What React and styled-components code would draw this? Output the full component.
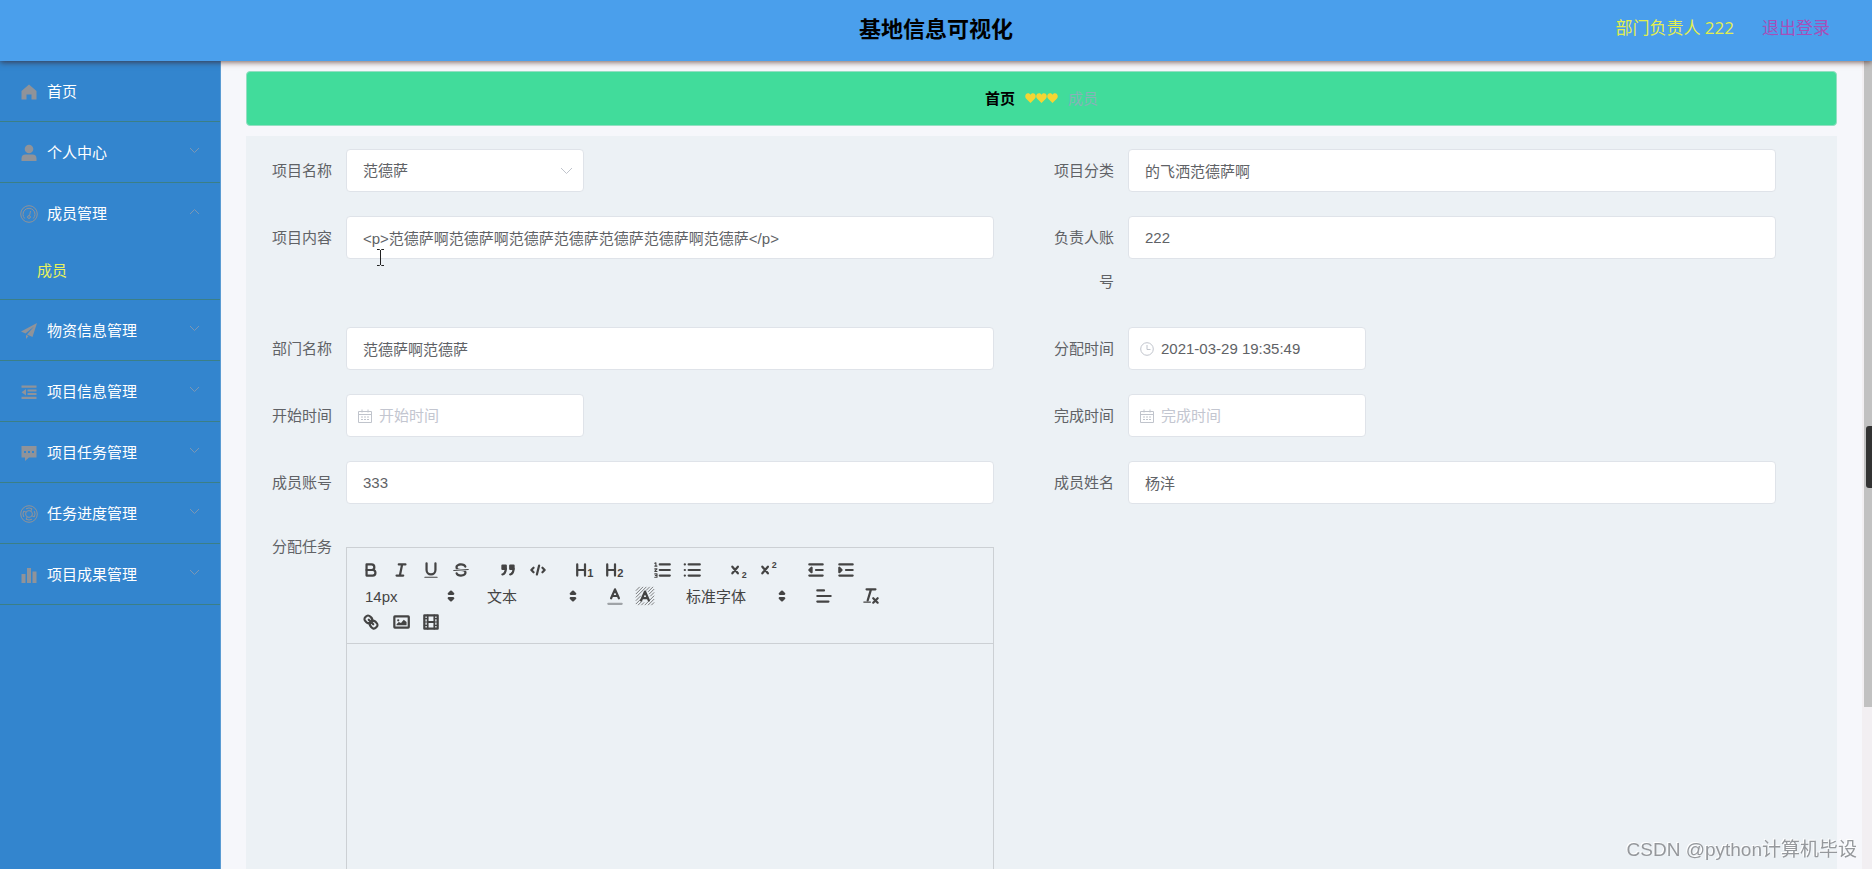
import React, { Component } from 'react';
import styled, { createGlobalStyle, css } from 'styled-components';

const GlobalStyle = createGlobalStyle`
  * {
    box-sizing: border-box;
  }
  body {
    margin: 0;
    background: #f6f7fb;
    font-family: 'Liberation Sans', 'Noto Sans CJK SC', sans-serif;
    font-size: 15px;
    color: #606266;
  }
  button, input, select, textarea {
    font: inherit;
    color: inherit;
    margin: 0;
    border: 0;
    background: none;
    outline: none;
  }
`;

const Page = styled.div`
  display: flex;
  flex-direction: column;
  height: 100vh;
  overflow: hidden;
`;
const Header = styled.header`
  display: grid;
  grid-template-columns: 1fr auto 1fr;
  align-items: center;
  flex: none;
  height: 61px;
  padding: 0 42px 6px;
  background: #4a9fec;
  box-shadow: 0 1px 6px rgba(60, 20, 10, 0.7);
  font-family: 'Open Sans', 'Noto Sans CJK SC', sans-serif;
  z-index: 1;
`;
const Title = styled.h1`
  grid-column: 2;
  margin: 0;
  font-size: 22px;
  line-height: 30px;
  color: #000;
`;
const HeaderRight = styled.div`
  display: flex;
  justify-content: flex-end;
  gap: 28px;
  font-size: 17px;
  line-height: 24px;
  color: #e3ee4e;
`;
const Logout = styled.a`
  color: #a64fb9;
  text-decoration: none;
`;
const Body = styled.div`
  display: flex;
  flex: 1;
  min-height: 0;
`;

const Sidebar = styled.nav`
  flex: none;
  width: 221px;
  background: #3385ce;
  border-right: 1px solid #5a9bd3;
`;
const MenuGroup = styled.div`
  border-bottom: 1px solid #3b7f86;
`;
const MenuButton = styled.button`
  display: flex;
  align-items: center;
  width: 100%;
  height: 60px;
  padding: 0 20px;
  color: #fff;
  text-align: left;
  cursor: pointer;
`;
const MenuIcon = styled.svg`
  flex: none;
  width: 18px;
  height: 18px;
  margin: 2px 9px 0 0;
  fill: #909399;
  stroke: none;
`;
const MenuText = styled.span`
  flex: 1;
  padding-bottom: 2px;
`;
const MenuArrow = styled.svg`
  width: 11px;
  height: 7px;
  margin-bottom: 4px;
  fill: none;
  stroke: #7b97b5;
`;
const SubLink = styled.a`
  display: block;
  height: 56px;
  padding-left: 37px;
  line-height: 55px;
  color: #e8f25c;
  text-decoration: none;
`;

const Main = styled.main`
  flex: 1;
  min-width: 0;
  padding: 10px 25px;
  overflow-y: auto;
  scrollbar-width: none;
`;
const Breadcrumb = styled.div`
  display: flex;
  align-items: center;
  justify-content: center;
  gap: 10px;
  height: 55px;
  margin-bottom: 10px;
  padding-bottom: 2px;
  background: #41dc9b;
  border: 1px solid #93dfc2;
  border-radius: 4px;
`;
const CrumbHome = styled.a`
  font-weight: bold;
  color: #000;
  text-decoration: none;
`;
const Hearts = styled.svg`
  width: 33px;
  height: 10px;
  fill: #f5d533;
`;
const CrumbCurrent = styled.span`
  color: #86b3b8;
`;

const Panel = styled.form`
  padding: 13px 61px 30px 12px;
  background: #ecf1f5;
`;
const FormGrid = styled.div`
  display: grid;
  grid-template-columns: 1fr 1fr;
  gap: 23px 46px;
`;
const FormItem = styled.div`
  display: flex;
  align-items: flex-start;
`;
const Label = styled.label`
  flex: none;
  width: 88px;
  padding-right: 14px;
  line-height: 44px;
  text-align: right;
`;
const control = css`
  height: 43px;
  padding: 0 16px;
  background: #fff;
  border: 1px solid #dfe3e9;
  border-radius: 4px;
`;
const Input = styled.input`
  ${control}
  flex: 1;
  min-width: 0;
`;
const SelectBox = styled.div`
  display: grid;
  align-items: center;
  width: 238px;
`;
const Select = styled.select`
  ${control}
  grid-area: 1 / 1;
  appearance: none;
`;
const SelectArrow = styled.svg`
  grid-area: 1 / 1;
  justify-self: end;
  width: 13px;
  height: 8px;
  margin-right: 11px;
  fill: none;
  stroke: #c0c4cc;
  pointer-events: none;
`;
const DateBox = styled.div`
  ${control}
  display: flex;
  align-items: center;
  gap: 7px;
  width: 238px;
  padding: 0 11px;
  svg {
    flex: none;
    width: 14px;
    height: 14px;
    fill: none;
    stroke: #c0c4cc;
  }
`;
const DateInput = styled.input`
  flex: 1;
  min-width: 0;
  padding: 0;
  &::placeholder {
    color: #c3c6d0;
    opacity: 1;
  }
`;

const EditorItem = styled(FormItem)`
  width: calc(50% - 23px);
  margin-top: 20px;
`;
const Editor = styled.div`
  flex: 1;
  min-width: 0;
  margin-top: 22px;
  border: 1px solid #ccd0d4;
`;
const Toolbar = styled.div`
  padding: 9px 9px 8px;
  border-bottom: 1px solid #ccd0d4;
`;
const ToolRow = styled.div`
  display: flex;
  gap: 17px;
  height: 26px;
`;
const ToolGroup = styled.div`
  display: flex;
`;
const ToolButton = styled.button`
  width: 30px;
  height: 26px;
  padding: 3px 5px;
  cursor: pointer;
`;
const ToolSvg = styled.svg`
  display: block;
  width: 20px;
  height: 20px;
  fill: none;
  stroke: #444;
  stroke-width: 2;
  stroke-linecap: round;
  stroke-linejoin: round;
  .thin {
    stroke-width: 1;
  }
  .hatch {
    stroke-width: 0.6;
  }
  .fill {
    fill: #444;
    stroke: none;
  }
  .both {
    fill: #444;
  }
  text {
    fill: #444;
    stroke: none;
    font-family: 'Liberation Sans', sans-serif;
    font-weight: bold;
  }
`;
const Picker = styled.div`
  display: grid;
  align-items: center;
  width: ${props => (props.$wide ? 115 : 105)}px;
  color: #444;
`;
const PickerSelect = styled.select`
  grid-area: 1 / 1;
  width: 100%;
  height: 26px;
  padding: 0 20px 0 9px;
  appearance: none;
`;
const PickerArrow = styled(ToolSvg)`
  grid-area: 1 / 1;
  justify-self: end;
  pointer-events: none;
`;
const EditorText = styled.textarea`
  display: block;
  width: 100%;
  height: 480px;
  padding: 13px 16px;
  resize: none;
`;

const ScrollTrack = styled.div`
  flex: none;
  width: 10px;
  padding-left: 2px;
  background: #f2eff2;
`;
const ScrollThumb = styled.div`
  height: 80%;
  background: #c1c1c1;
`;
const SideHandle = styled.div`
  position: fixed;
  right: 0;
  top: 426px;
  width: 6px;
  height: 62px;
  background: #333;
  border-radius: 3px 0 0 3px;
`;
const Watermark = styled.div`
  position: fixed;
  right: 15px;
  bottom: 5px;
  font-size: 19px;
  line-height: 28px;
  color: #95989c;
  text-shadow: -1px -1px 0 #fff;
  pointer-events: none;
`;
const TextCursor = styled.svg`
  position: fixed;
  left: 376px;
  top: 249px;
  width: 9px;
  height: 17px;
  fill: none;
  stroke: #222;
  pointer-events: none;
`;

const menuIcons = {
  home: <path d="M9 1.5L1.5 8v8.5h5v-5h5v5h5V8z" />,
  user: (
    <g>
      <circle cx="9" cy="5" r="4.3" />
      <path d="M1.5 17v-2.5a4 4 0 0 1 4-4h7a4 4 0 0 1 4 4V17z" />
    </g>
  ),
  meter: (
    <g fill="none" stroke="#909399">
      <circle cx="9" cy="9" r="8.3" />
      <path d="M4.700 13.500a6 6 0 1 1 8.600 0M9.600 10.500l.9-4.500" />
      <circle cx="9" cy="12" r="1.4" />
    </g>
  ),
  plane: <path d="M17 1L1 9.500l4.500 2L14 4.500 7 12.500l5.500 2.500zM6 13v4l2.500-3z" />,
  fold: <path d="M1.500 2.500h15v2.300h-15zM7.500 6.500h9v2h-9zM7.500 10h9v2h-9zM1.500 13.700h15V16h-15zM6 6v6.500L1.500 9.200z" />,
  chat: (
    <path
      fillRule="evenodd"
      d="M1.500 2h15v11.500H9L5 17v-3.500H1.500zM4 7v2h2V7zM8 7v2h2V7zM12 7v2h2V7z"
    />
  ),
  buoy: (
    <g fill="none" stroke="#909399">
      <circle cx="9" cy="9" r="8.3" />
      <circle cx="9" cy="9" r="3.4" />
      <path d="M6 3.800a6 6 0 0 1 6 0l-1.300 2.400M14.200 6a6 6 0 0 1 0 6l-2.400-1.300M12 14.200a6 6 0 0 1-6 0l1.300-2.400M3.800 12a6 6 0 0 1 0-6l2.400 1.300" />
    </g>
  ),
  bars: <path d="M1.500 8h4v9h-4zM7 2h4v15H7zM12.500 5.500h4V17h-4z" />
};

const toolIcons = {
  加粗: (
    <g>
      <path d="M5,4H9.500A2.500,2.500,0,0,1,9.500,9H5Z" />
      <path d="M5,9h5.500a2.500,2.500,0,0,1,0,5H5Z" />
    </g>
  ),
  斜体: <path d="M7,4H13M5,14H11M8,14L10,4" />,
  下划线: (
    <g>
      <path strokeWidth="2" d="M5,3V9a4,4,0,0,0,8,0V3" />
      <rect className="fill" x="3" y="15" width="12" height="1" rx="0.5" />
    </g>
  ),
  删除线: (
    <g>
      <path className="thin" d="M15.500,8.500L2.500,9.500" />
      <path className="fill" d="M9.007,8C6.542,7.791,6,7.519,6,6.500,6,5.792,7.283,5,9,5c1.571,0,2.765.679,2.969,1.309a1,1,0,0,0,1.900-.617C13.356,4.106,11.354,3,9,3,6.200,3,4,4.538,4,6.500a3.200,3.200,0,0,0,.5,1.843Z" />
      <path className="fill" d="M8.984,10C11.457,10.208,12,10.479,12,11.500c0,.708-1.283,1.500-3,1.500-1.571,0-2.765-.679-2.969-1.309a1,1,0,1,0-1.900.617C4.644,13.894,6.646,15,9,15c2.800,0,5-1.538,5-3.500a3.200,3.200,0,0,0-.5-1.843Z" />
    </g>
  ),
  引用: (
    <g>
      <path className="both" d="M4,5h3v3h-3zM11,5h3v3h-3z" />
      <path className="both" d="M7,8c0,4.031-3,5-3,5M14,8c0,4.031-3,5-3,5" />
    </g>
  ),
  代码: <path d="M5,7L3,9L5,11M13,7L15,9L13,11M10,5L8,13" />,
  标题1: (
    <g>
      <path d="M2,4V14M9,4V14M2,9H9" />
      <text x="11" y="15" fontSize="10">1</text>
    </g>
  ),
  标题2: (
    <g>
      <path d="M2,4V14M9,4V14M2,9H9" />
      <text x="11" y="15" fontSize="10">2</text>
    </g>
  ),
  有序列表: (
    <g>
      <path d="M7,4H16M7,9H16M7,14H16" />
      <path className="thin" d="M2.500,5.500H4.500M3.500,5.500V2.500L2.500,3M2.500,8H4.500L2.500,10.300H4.500M2.500,12.500H4.500V15.500H2.500M3,14H4.500" />
    </g>
  ),
  无序列表: <path d="M6,4H16M6,9H16M6,14H16M2.500,4H2.600M2.500,9H2.600M2.500,14H2.600" />,
  下标: (
    <g>
      <path d="M3,6L8,12M8,6L3,12" />
      <text x="11.5" y="16" fontSize="8">2</text>
    </g>
  ),
  上标: (
    <g>
      <path d="M3,6L8,12M8,6L3,12" />
      <text x="11.5" y="7" fontSize="8">2</text>
    </g>
  ),
  减少缩进: (
    <g>
      <path d="M3,14H15M3,4H15M9,9H15" />
      <path className="both" d="M5,7V11L3,9Z" />
    </g>
  ),
  增加缩进: (
    <g>
      <path d="M3,14H15M3,4H15M9,9H15" />
      <path className="both" d="M3,7V11L5,9Z" />
    </g>
  ),
  文字颜色: (
    <g>
      <path d="M3,16H15" stroke="#9fa3a7" />
      <path d="M5.500,11L9,3L12.500,11M7,9H11" />
    </g>
  ),
  背景颜色: (
    <g>
      <path
        className="hatch"
        d="M1,4L4,1M1,7L7,1M1,10L10,1M1,13L5,9M1,16L5,12M3,17L6,14M6,17L8,15M9,17L17,9M12,17L17,12M15,17L17,15M10,4L13,1M12,5L16,1M13,7L17,3M14,9L17,6"
      />
      <path d="M5.500,13L9,5L12.500,13M7,11H11" />
    </g>
  ),
  对齐: <path d="M3,9H15M3,14H13M3,4H9" />,
  清除格式: (
    <g>
      <path d="M5,3H13M6,13L9,3M11,11L15,15M15,11L11,15" />
      <rect className="fill" x="2" y="14" width="7" height="1" rx="0.5" />
    </g>
  ),
  链接: (
    <g>
      <path d="M7,7L11,11" />
      <path d="M8.900,4.577a3.476,3.476,0,0,1,.36,4.679A3.476,3.476,0,0,1,4.577,8.900C3.185,7.500,2.035,6.400,4.217,4.217S7.500,3.185,8.900,4.577Z" />
      <path d="M13.423,9.100a3.476,3.476,0,0,0-4.679-.36,3.476,3.476,0,0,0,.36,4.679c1.392,1.392,2.500,2.542,4.679.36S14.815,10.500,13.423,9.100Z" />
    </g>
  ),
  图片: (
    <g>
      <rect x="3" y="4" width="13" height="10" rx="0.5" />
      <circle className="fill" cx="6.5" cy="7.5" r="1" />
      <path className="fill" d="M5,12V11l2-2 2,1L11.500,7 14,9v3z" />
    </g>
  ),
  视频: (
    <g>
      <rect x="3" y="3" width="12" height="12" />
      <path d="M6,3V15M12,3V15M6,9H12" strokeWidth="1.6" />
      <path className="thin" d="M3,6H6M3,9H6M3,12H6M12,6H15M12,9H15M12,12H15" />
    </g>
  )
};

const menus = [
  { icon: 'home', text: '首页', leaf: true },
  { icon: 'user', text: '个人中心' },
  { icon: 'meter', text: '成员管理', children: ['成员'] },
  { icon: 'plane', text: '物资信息管理' },
  { icon: 'fold', text: '项目信息管理' },
  { icon: 'chat', text: '项目任务管理' },
  { icon: 'buoy', text: '任务进度管理' },
  { icon: 'bars', text: '项目成果管理' }
];

const fields = [
  { name: 'xiangmumingcheng', label: '项目名称', type: 'select', value: '范德萨' },
  { name: 'xiangmufenlei', label: '项目分类', value: '的飞洒范德萨啊' },
  { name: 'xiangmuneirong', label: '项目内容', value: '<p>范德萨啊范德萨啊范德萨范德萨范德萨范德萨啊范德萨</p>' },
  { name: 'fuzerenzhanghao', label: '负责人账号', value: '222' },
  { name: 'bumenmingcheng', label: '部门名称', value: '范德萨啊范德萨' },
  { name: 'fenpeishijian', label: '分配时间', type: 'time', value: '2021-03-29 19:35:49' },
  { name: 'kaishishijian', label: '开始时间', type: 'date', value: '' },
  { name: 'wanchengshijian', label: '完成时间', type: 'date', value: '' },
  { name: 'chengyuanzhanghao', label: '成员账号', value: '333' },
  { name: 'chengyuanxingming', label: '成员姓名', value: '杨洋' }
];

// strings are pickers, arrays are groups of buttons
const toolRows = [
  [
    ['加粗', '斜体', '下划线', '删除线'],
    ['引用', '代码'],
    ['标题1', '标题2'],
    ['有序列表', '无序列表'],
    ['下标', '上标'],
    ['减少缩进', '增加缩进']
  ],
  ['14px', '文本', ['文字颜色', '背景颜色'], '标准字体', ['对齐'], ['清除格式']],
  [['链接', '图片', '视频']]
];

const ClockIcon = () => (
  <svg viewBox="0 0 14 14">
    <circle cx="7" cy="7" r="6.3" />
    <path d="M7 3v4.500h3.500" />
  </svg>
);

const CalendarIcon = () => (
  <svg viewBox="0 0 14 14">
    <path d="M.5 2.500h13v11H.5zM.5 5.500h13M4 .5v3M10 .5v3" />
    <path d="M3 8h8M3 10.500h8" strokeDasharray="2 1" />
  </svg>
);

class App extends Component {
  state = {
    open: '成员管理'
  }

  toggle = text => {
    this.setState(prev => ({ open: prev.open === text ? '' : text }));
  }

  renderMenu = menu => {
    const opened = !menu.leaf && this.state.open === menu.text;

    return (
      <MenuGroup key={menu.text}>
        <MenuButton type="button" onClick={() => this.toggle(menu.text)}>
          <MenuIcon viewBox="0 0 18 18">{menuIcons[menu.icon]}</MenuIcon>
          <MenuText>{menu.text}</MenuText>
          {!menu.leaf && (
            <MenuArrow viewBox="0 0 11 7">
              <path d={opened ? 'M1 6L5.500 1.500L10 6' : 'M1 1L5.500 5.500L10 1'} />
            </MenuArrow>
          )}
        </MenuButton>
        {opened && (menu.children || []).map(child => (
          <SubLink key={child} href="#chengyuan">{child}</SubLink>
        ))}
      </MenuGroup>
    );
  }

  renderControl = field => {
    if (field.type === 'select') {
      return (
        <SelectBox>
          <Select id={field.name} defaultValue={field.value}>
            <option>{field.value}</option>
          </Select>
          <SelectArrow viewBox="0 0 13 8">
            <path d="M1 1L6.500 6.500L12 1" />
          </SelectArrow>
        </SelectBox>
      );
    }
    if (field.type) {
      return (
        <DateBox>
          {field.type === 'time' ? <ClockIcon /> : <CalendarIcon />}
          <DateInput id={field.name} defaultValue={field.value} placeholder={field.label} />
        </DateBox>
      );
    }
    return <Input id={field.name} defaultValue={field.value} />;
  }

  renderTool = (tool, i) => {
    if (typeof tool === 'string') {
      return (
        <Picker key={i} $wide={tool === '标准字体'}>
          <PickerSelect aria-label={tool}>
            <option>{tool}</option>
          </PickerSelect>
          <PickerArrow viewBox="0 0 18 18">
            <path className="both" d="M7,11L9,13L11,11ZM7,7L9,5L11,7Z" />
          </PickerArrow>
        </Picker>
      );
    }
    return (
      <ToolGroup key={i}>
        {tool.map(name => (
          <ToolButton key={name} type="button" aria-label={name}>
            <ToolSvg viewBox="0 0 18 18">{toolIcons[name]}</ToolSvg>
          </ToolButton>
        ))}
      </ToolGroup>
    );
  }

  render() {
    return (
      <Page>
        <GlobalStyle />
        <Header>
          <Title>基地信息可视化</Title>
          <HeaderRight>
            <span>部门负责人 222</span>
            <Logout href="#logout">退出登录</Logout>
          </HeaderRight>
        </Header>
        <Body>
          <Sidebar>{menus.map(this.renderMenu)}</Sidebar>
          <Main>
            <Breadcrumb>
              <CrumbHome href="#home">首页</CrumbHome>
              <Hearts viewBox="0 0 33 10">
                {[0, 11, 22].map(x => (
                  <path
                    key={x}
                    transform={`translate(${x} 0)`}
                    d="M5.500 10L1 5.500C-.5 3.500.3.300 3 .2c1.300 0 2.100.7 2.500 1.500C5.900.9 6.700.2 8 .2c2.700.1 3.500 3.300 2 5.300z"
                  />
                ))}
              </Hearts>
              <CrumbCurrent>成员</CrumbCurrent>
            </Breadcrumb>
            <Panel>
              <FormGrid>
                {fields.map(field => (
                  <FormItem key={field.name}>
                    <Label htmlFor={field.name}>{field.label}</Label>
                    {this.renderControl(field)}
                  </FormItem>
                ))}
              </FormGrid>
              <EditorItem>
                <Label htmlFor="fenpeirenwu">分配任务</Label>
                <Editor>
                  <Toolbar>
                    {toolRows.map((row, i) => (
                      <ToolRow key={i}>{row.map(this.renderTool)}</ToolRow>
                    ))}
                  </Toolbar>
                  <EditorText id="fenpeirenwu" />
                </Editor>
              </EditorItem>
            </Panel>
          </Main>
          <ScrollTrack>
            <ScrollThumb />
          </ScrollTrack>
        </Body>
        <SideHandle />
        <TextCursor viewBox="0 0 9 17">
          <path d="M1 .5H3.500L4.500 1.500L5.500 .5H8M4.500 1V16M1 16.500H3.500L4.500 15.500L5.500 16.500H8" />
        </TextCursor>
        <Watermark>CSDN @python计算机毕设</Watermark>
      </Page>
    );
  }
}

export default App;
